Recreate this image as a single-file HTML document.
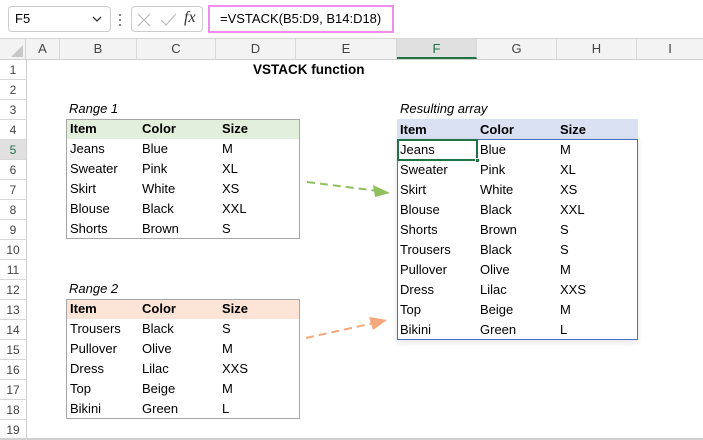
<!DOCTYPE html>
<html><head><meta charset="utf-8"><style>
*{margin:0;padding:0;box-sizing:border-box}
body{width:703px;height:440px;background:#fff;position:relative;overflow:hidden;font-family:"Liberation Sans",sans-serif;font-size:13px;color:#000}
.a{position:absolute}
.t{position:absolute;line-height:20px;white-space:nowrap}
.hd{position:absolute;top:39px;height:20px;line-height:20px;text-align:center;color:#444;font-size:13px;border-right:1px solid #d8d8d8}
.rn{position:absolute;left:0;width:26px;height:20px;line-height:20px;text-align:center;color:#444;font-size:12px;border-bottom:1px solid #d8d8d8;background:#fff}
b{font-weight:bold}
</style></head><body>
<div class="a" style="left:0;top:0;width:703px;height:39px;background:#fff;border-bottom:1px solid #d4d4d4"></div>
<div class="a" style="left:8px;top:6px;width:103px;height:26px;border:1px solid #ccc;border-radius:4px"></div>
<div class="t" style="left:15px;top:9px">F5</div>
<svg class="a" style="left:92px;top:15px" width="10" height="8"><path d="M1 2 L5 6 L9 2" stroke="#333" stroke-width="1.3" fill="none"/></svg>
<div class="a" style="left:119px;top:14px;width:2px;height:2px;background:#888"></div>
<div class="a" style="left:119px;top:19px;width:2px;height:2px;background:#888"></div>
<div class="a" style="left:119px;top:24px;width:2px;height:2px;background:#888"></div>
<div class="a" style="left:131px;top:6px;width:72px;height:26px;border:1px solid #ccc;border-radius:4px"></div>
<svg class="a" style="left:136px;top:10px" width="70" height="20"><path d="M2 4 L14 16 M14 4 L2 16" stroke="#bbb" stroke-width="1.2"/><path d="M25 10 L30 15 L40 4" stroke="#bbb" stroke-width="1.2" fill="none"/></svg>
<div class="t" style="left:184px;top:8px;font-family:'Liberation Serif',serif;font-style:italic;font-size:16px;color:#333">fx</div>
<div class="a" style="left:208px;top:5px;width:186px;height:28px;border:2px solid #f08ef0"></div>
<div class="t" style="left:220px;top:9px;font-size:13px">=VSTACK(B5:D9, B14:D18)</div>
<!-- header row -->
<div class="a" style="left:0;top:39px;width:703px;height:21px;background:#f3f3f3;border-bottom:1px solid #d0d0d0"></div>
<svg class="a" style="left:8px;top:44px" width="16" height="14"><path d="M15 1 L15 13 L3 13 Z" fill="#c8c8c8"/></svg>
<div class="hd" style="left:0;width:26px;border-right:1px solid #d0d0d0"></div>
<div class="hd" style="left:26px;width:34px">A</div>
<div class="hd" style="left:60px;width:77px">B</div>
<div class="hd" style="left:137px;width:79px">C</div>
<div class="hd" style="left:216px;width:80px">D</div>
<div class="hd" style="left:296px;width:101px">E</div>
<div class="hd" style="left:397px;width:80px;background:#e0e0e0;color:#217346;border-bottom:2px solid #217346">F</div>
<div class="hd" style="left:477px;width:80px">G</div>
<div class="hd" style="left:557px;width:80px">H</div>
<div class="hd" style="left:637px;width:66px;border:none">I</div>
<!-- row numbers -->
<div class="a" style="left:0;top:60px;width:27px;height:380px;background:#fff;border-right:1px solid #d0d0d0"></div>
<div class="rn" style="top:60px">1</div><div class="rn" style="top:80px">2</div><div class="rn" style="top:100px">3</div><div class="rn" style="top:120px">4</div>
<div class="rn" style="top:140px;background:#e0e0e0;color:#217346">5</div><div class="rn" style="top:160px">6</div><div class="rn" style="top:180px">7</div><div class="rn" style="top:200px">8</div>
<div class="rn" style="top:220px">9</div><div class="rn" style="top:240px">10</div><div class="rn" style="top:260px">11</div><div class="rn" style="top:280px">12</div>
<div class="rn" style="top:300px">13</div><div class="rn" style="top:320px">14</div><div class="rn" style="top:340px">15</div><div class="rn" style="top:360px">16</div>
<div class="rn" style="top:380px">17</div><div class="rn" style="top:400px">18</div><div class="rn" style="top:420px">19</div>
<div class="a" style="left:397px;top:40px;width:0;height:0"></div>
<div class="a" style="left:0;top:438px;width:703px;height:2px;background:#d0d0d0"></div>
<div class="t" style="left:253px;top:60px;font-weight:bold;font-size:13.5px">VSTACK function</div>
<!-- Range 1 -->
<div class="t" style="left:69px;top:99px;font-style:italic">Range 1</div>
<div class="a" style="left:66px;top:119px;width:234px;height:120px;border:1px solid #a6a6a6"></div>
<div class="a" style="left:67px;top:120px;width:232px;height:19px;background:#e2efda"></div>
<div class="t" style="left:70px;top:119px"><b>Item</b></div><div class="t" style="left:142px;top:119px"><b>Color</b></div><div class="t" style="left:222px;top:119px"><b>Size</b></div>
<div class="t" style="left:70px;top:139px">Jeans</div><div class="t" style="left:142px;top:139px">Blue</div><div class="t" style="left:222px;top:139px">M</div>
<div class="t" style="left:70px;top:159px">Sweater</div><div class="t" style="left:142px;top:159px">Pink</div><div class="t" style="left:222px;top:159px">XL</div>
<div class="t" style="left:70px;top:179px">Skirt</div><div class="t" style="left:142px;top:179px">White</div><div class="t" style="left:222px;top:179px">XS</div>
<div class="t" style="left:70px;top:199px">Blouse</div><div class="t" style="left:142px;top:199px">Black</div><div class="t" style="left:222px;top:199px">XXL</div>
<div class="t" style="left:70px;top:219px">Shorts</div><div class="t" style="left:142px;top:219px">Brown</div><div class="t" style="left:222px;top:219px">S</div>
<!-- Range 2 -->
<div class="t" style="left:69px;top:279px;font-style:italic">Range 2</div>
<div class="a" style="left:66px;top:299px;width:234px;height:120px;border:1px solid #a6a6a6"></div>
<div class="a" style="left:67px;top:300px;width:232px;height:19px;background:#fce4d6"></div>
<div class="t" style="left:70px;top:299px"><b>Item</b></div><div class="t" style="left:142px;top:299px"><b>Color</b></div><div class="t" style="left:222px;top:299px"><b>Size</b></div>
<div class="t" style="left:70px;top:319px">Trousers</div><div class="t" style="left:142px;top:319px">Black</div><div class="t" style="left:222px;top:319px">S</div>
<div class="t" style="left:70px;top:339px">Pullover</div><div class="t" style="left:142px;top:339px">Olive</div><div class="t" style="left:222px;top:339px">M</div>
<div class="t" style="left:70px;top:359px">Dress</div><div class="t" style="left:142px;top:359px">Lilac</div><div class="t" style="left:222px;top:359px">XXS</div>
<div class="t" style="left:70px;top:379px">Top</div><div class="t" style="left:142px;top:379px">Beige</div><div class="t" style="left:222px;top:379px">M</div>
<div class="t" style="left:70px;top:399px">Bikini</div><div class="t" style="left:142px;top:399px">Green</div><div class="t" style="left:222px;top:399px">L</div>
<!-- arrows -->
<svg class="a" style="left:300px;top:170px" width="100" height="180">
<path d="M7 12 L78 21" stroke="#8fbf5f" stroke-width="2" stroke-dasharray="8,5" fill="none"/>
<path d="M90 23 L73 15 L75 27 Z" fill="#8fbf5f"/>
<path d="M6 168 L74 153" stroke="#f4a77a" stroke-width="2" stroke-dasharray="8,5" fill="none"/>
<path d="M87 150 L69 147 L73 160 Z" fill="#f4a77a"/>
</svg>
<!-- Result -->
<div class="t" style="left:400px;top:99px;font-style:italic">Resulting array</div>
<div class="a" style="left:397px;top:119px;width:241px;height:20px;background:#d9e1f2"></div>
<div class="a" style="left:397px;top:139px;width:241px;height:201px;border:1px solid #4472c4;box-shadow:0 2px 6px rgba(0,0,0,.12)"></div>
<div class="a" style="left:397px;top:139px;width:81px;height:22px;border:2px solid #217346"></div>
<div class="a" style="left:475px;top:158px;width:5px;height:5px;background:#217346;border:1px solid #fff"></div>
<div class="t" style="left:400px;top:120px"><b>Item</b></div><div class="t" style="left:480px;top:120px"><b>Color</b></div><div class="t" style="left:560px;top:120px"><b>Size</b></div>
<div class="t" style="left:400px;top:140px">Jeans</div><div class="t" style="left:480px;top:140px">Blue</div><div class="t" style="left:560px;top:140px">M</div>
<div class="t" style="left:400px;top:160px">Sweater</div><div class="t" style="left:480px;top:160px">Pink</div><div class="t" style="left:560px;top:160px">XL</div>
<div class="t" style="left:400px;top:180px">Skirt</div><div class="t" style="left:480px;top:180px">White</div><div class="t" style="left:560px;top:180px">XS</div>
<div class="t" style="left:400px;top:200px">Blouse</div><div class="t" style="left:480px;top:200px">Black</div><div class="t" style="left:560px;top:200px">XXL</div>
<div class="t" style="left:400px;top:220px">Shorts</div><div class="t" style="left:480px;top:220px">Brown</div><div class="t" style="left:560px;top:220px">S</div>
<div class="t" style="left:400px;top:240px">Trousers</div><div class="t" style="left:480px;top:240px">Black</div><div class="t" style="left:560px;top:240px">S</div>
<div class="t" style="left:400px;top:260px">Pullover</div><div class="t" style="left:480px;top:260px">Olive</div><div class="t" style="left:560px;top:260px">M</div>
<div class="t" style="left:400px;top:280px">Dress</div><div class="t" style="left:480px;top:280px">Lilac</div><div class="t" style="left:560px;top:280px">XXS</div>
<div class="t" style="left:400px;top:300px">Top</div><div class="t" style="left:480px;top:300px">Beige</div><div class="t" style="left:560px;top:300px">M</div>
<div class="t" style="left:400px;top:320px">Bikini</div><div class="t" style="left:480px;top:320px">Green</div><div class="t" style="left:560px;top:320px">L</div>
</body></html>
